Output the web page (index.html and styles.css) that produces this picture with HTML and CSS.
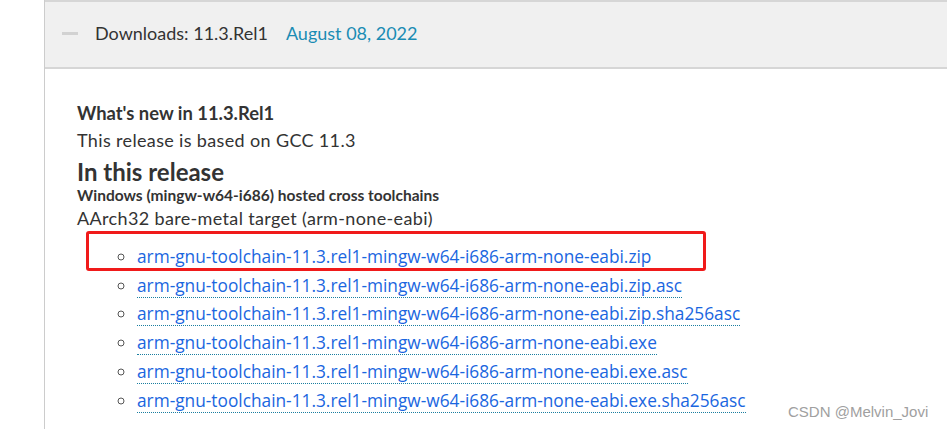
FILE: index.html
```html
<!doctype html>
<html lang="en">
<head>
    <meta charset="UTF-8">
    <title>Downloads: 11.3.Rel1</title>
    <link rel="stylesheet" href="styles.css">
</head>
<body>
<div class="page">
    <div class="panel-head">
        <span class="minus"></span>
        <span class="title">Downloads: 11.3.Rel1</span>
        <span class="date">August 08, 2022</span>
    </div>
    <div class="panel-body">
        <h4>What's new in 11.3.Rel1</h4>
        <p>This release is based on GCC 11.3</p>
        <h3>In this release</h3>
        <h5>Windows (mingw-w64-i686) hosted cross toolchains</h5>
        <p>AArch32 bare-metal target (arm-none-eabi)</p>
        <ul class="files">
            <li class="marked"><a href="#">arm-gnu-toolchain-11.3.rel1-mingw-w64-i686-arm-none-eabi.zip</a></li>
            <li><a href="#">arm-gnu-toolchain-11.3.rel1-mingw-w64-i686-arm-none-eabi.zip.asc</a></li>
            <li><a href="#">arm-gnu-toolchain-11.3.rel1-mingw-w64-i686-arm-none-eabi.zip.sha256asc</a></li>
            <li><a href="#">arm-gnu-toolchain-11.3.rel1-mingw-w64-i686-arm-none-eabi.exe</a></li>
            <li><a href="#">arm-gnu-toolchain-11.3.rel1-mingw-w64-i686-arm-none-eabi.exe.asc</a></li>
            <li><a href="#">arm-gnu-toolchain-11.3.rel1-mingw-w64-i686-arm-none-eabi.exe.sha256asc</a></li>
        </ul>
    </div>
</div>
<div class="mark">CSDN @Melvin_Jovi</div>
</body>
</html>
```

FILE: styles.css
```css
* {
    margin: 0;
    padding: 0;
}

body {
    background-color: #fff;
    font-family: Lato, "Noto Sans", sans-serif;
    color: #333;
    overflow: hidden;
}

.page {
    margin-left: 44px;
    border-left: 1px solid #ccc;
    height: 429px;
}

.panel-head {
    height: 69px;
    box-sizing: border-box;
    background-color: #f0f0f0;
    border-top: 2px solid #d6d6d6;
    border-bottom: 2px solid #d6d6d6;
    display: flex;
    align-items: center;
    padding-bottom: 3px;
    font-size: 18px;
}

.minus {
    width: 16px;
    height: 3px;
    background-color: #d2d2d2;
    margin-left: 17px;
    margin-right: 17px;
}

.date {
    color: #1a8cb4;
    margin-left: 18px;
}

.panel-body {
    padding: 32px 0 0 32px;
}

h4 {
    font-size: 18.4px;
    line-height: 24px;
    font-weight: 700;
}

p {
    font-size: 18px;
    letter-spacing: 0.35px;
    line-height: 24px;
}

h4 + p {
    margin-top: 3px;
}

h3 {
    font-size: 24px;
    line-height: 27px;
    font-weight: 700;
    margin-top: 6px;
}

h5 {
    font-size: 15.5px;
    line-height: 18px;
    font-weight: 700;
    margin-top: 1px;
}

h5 + p {
    margin-top: 2px;
}

.files {
    list-style: circle;
    margin-top: 13px;
    padding-left: 60px;
    font-family: "Open Sans", "Noto Sans", sans-serif;
    font-size: 17.3px;
    line-height: 28.7px;
}

.files li::marker {
    color: #555;
}

.files a {
    color: #1a66e0;
    text-decoration: none;
    border-bottom: 1px dotted #1a7ea0;
}

.marked {
    position: relative;
}

.marked::before {
    content: "";
    position: absolute;
    left: -51px;
    top: -12px;
    width: 614px;
    height: 34px;
    border: 3px solid #f01a1a;
    border-radius: 3px;
}

.mark {
    position: absolute;
    left: 788px;
    top: 403px;
    font-family: "Liberation Sans", Arial, sans-serif;
    font-size: 15px;
    color: #a0a0a0;
}
```
